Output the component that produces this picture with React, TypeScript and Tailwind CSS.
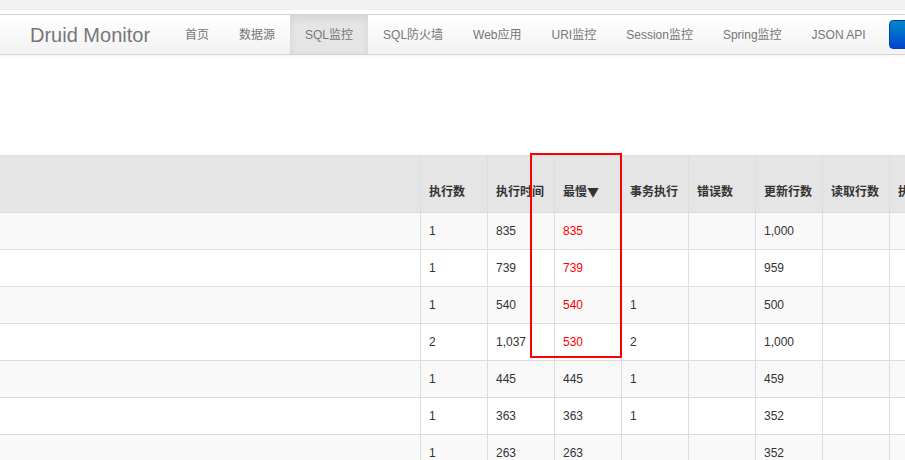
import React from "react";

const font = { fontFamily: '"Liberation Sans", Arial, "Noto Sans CJK SC", sans-serif' };

const navItems = ["首页", "数据源", "SQL监控", "SQL防火墙", "Web应用", "URI监控", "Session监控", "Spring监控", "JSON API"];

const headers = ["", "执行数", "执行时间", "最慢", "事务执行", "错误数", "更新行数", "读取行数", "执行中"];

// [执行数, 执行时间, 最慢, 事务执行, 错误数, 更新行数, 读取行数, 执行中], red = 最慢 highlighted
const rows: { cells: string[]; red: boolean }[] = [
  { cells: ["1", "835", "835", "", "", "1,000", "", ""], red: true },
  { cells: ["1", "739", "739", "", "", "959", "", ""], red: true },
  { cells: ["1", "540", "540", "1", "", "500", "", ""], red: true },
  { cells: ["2", "1,037", "530", "2", "", "1,000", "", ""], red: true },
  { cells: ["1", "445", "445", "1", "", "459", "", ""], red: false },
  { cells: ["1", "363", "363", "1", "", "352", "", ""], red: false },
  { cells: ["1", "263", "263", "", "", "352", "", ""], red: false },
];

const grid = "grid grid-cols-[420px_repeat(8,67px)] w-[956px]";

export default function App() {
  return (
    <div className="relative w-[905px] h-[460px] overflow-hidden bg-white text-[#333]" style={font}>
      {/* top strip */}
      <div className="h-[10px] bg-[#f1f2f4]" />
      <div className="h-[4px] bg-white" />

      {/* navbar */}
      <div className="flex items-center h-[41px] border-y border-[#d4d4d4] bg-gradient-to-b from-white to-[#f2f2f2] shadow-[0_1px_4px_rgba(0,0,0,0.06)]">
        <div className="w-[170px] shrink-0 pl-[30px] text-[20px] text-[#777] leading-none whitespace-nowrap">Druid Monitor</div>
        {navItems.map((item) => (
          <div
            key={item}
            className={[
              "h-full shrink-0 whitespace-nowrap flex items-center px-[15px] text-[12px] text-[#777]",
              item === "SQL监控" ? "bg-[#e5e5e5] shadow-[inset_0_3px_8px_rgba(0,0,0,0.08)] text-[#555]" : "",
            ].join(" ")}
          >
            {item}
          </div>
        ))}
        <div className="ml-[8px] h-[29px] w-[40px] shrink-0 rounded-[4px] bg-gradient-to-b from-[#0088cc] to-[#0044cc] border border-[#0044aa]" />
      </div>

      {/* table */}
      <div className="mt-[100px]">
        <div className={`${grid} h-[57px] bg-[#e5e5e5] border-t border-[#ddd]`}>
          {headers.map((h, i) => (
            <div
              key={i}
              className={[
                "flex items-end pb-[11px] pl-[8px] text-[12px] font-bold text-[#333] whitespace-nowrap overflow-hidden",
                i > 0 ? "border-l border-[#ddd]" : "",
              ].join(" ")}
            >
              {h}
              {h === "最慢" && (
                <span className="text-[12px]" style={{ fontFamily: '"Noto Sans CJK SC", sans-serif' }}>▼</span>
              )}
            </div>
          ))}
        </div>
        {rows.map((r, ri) => (
          <div
            key={ri}
            className={`${grid} h-[37px] border-t border-[#ddd] ${ri % 2 === 0 ? "bg-[#f9f9f9]" : "bg-white"}`}
          >
            <div />
            {r.cells.map((c, ci) => (
              <div
                key={ci}
                className={[
                  "flex items-center pl-[8px] text-[12px] border-l border-[#ddd]",
                  ci === 2 && r.red ? "text-[#ff0000]" : "text-[#333]",
                ].join(" ")}
              >
                {c}
              </div>
            ))}
          </div>
        ))}
      </div>

      {/* highlight box around 最慢 */}
      <div className="absolute left-[530px] top-[153px] w-[92px] h-[205px] border-2 border-[#ff0000] pointer-events-none" />
    </div>
  );
}
